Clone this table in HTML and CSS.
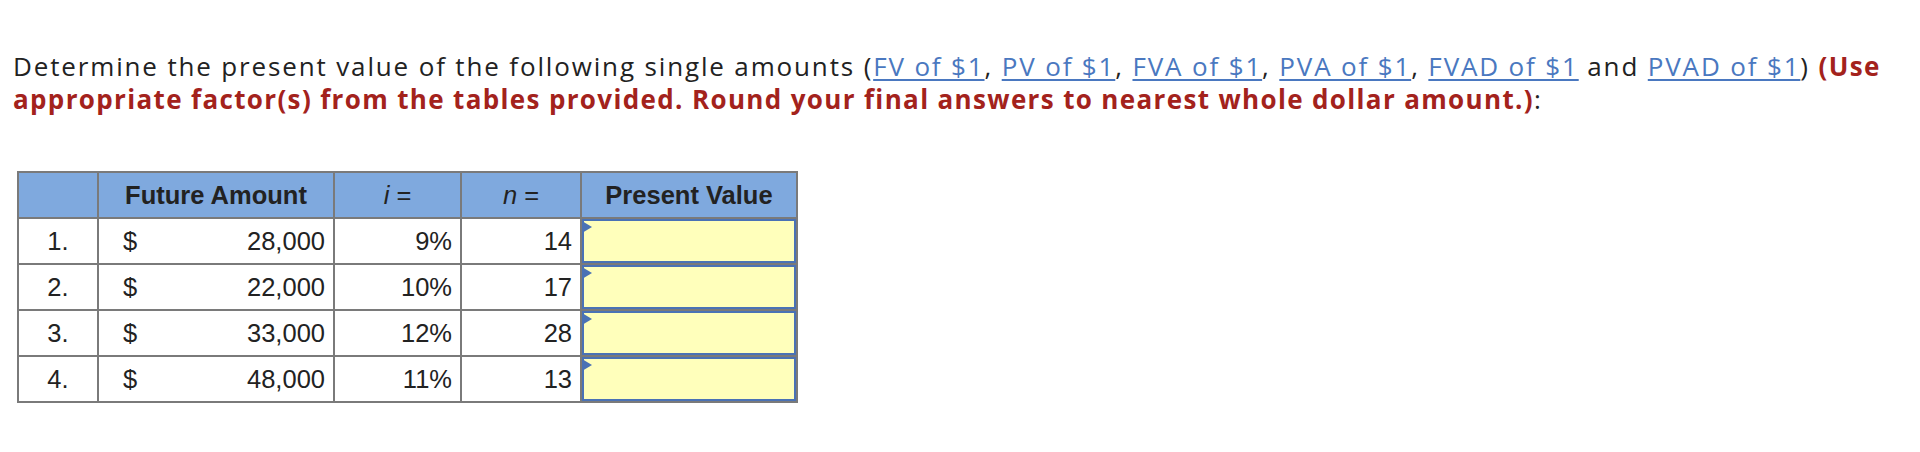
FILE: index.html
```html
<!DOCTYPE html>
<html>
<head>
<meta charset="utf-8">
<link rel="stylesheet" href="styles.css">
</head>
<body>
<div class="page">
  <p class="prompt">Determine the present value of the following single amounts (<a href="#">FV of $1</a>, <a href="#">PV of $1</a>, <a href="#">FVA of $1</a>, <a href="#">PVA of $1</a>, <a href="#">FVAD of $1</a> and <a href="#">PVAD of $1</a>) <strong class="note">(Use appropriate factor(s) from the tables provided. Round your final answers to nearest whole dollar amount.)</strong>:</p>

  <table class="grid">
    <colgroup>
      <col class="c-num"><col class="c-amt"><col class="c-rate"><col class="c-n"><col class="c-pv">
    </colgroup>
    <thead>
      <tr>
        <th></th>
        <th class="bold">Future Amount</th>
        <th><i>i</i> =</th>
        <th><i>n</i> =</th>
        <th class="bold">Present Value</th>
      </tr>
    </thead>
    <tbody>
      <tr>
        <td class="num">1.</td>
        <td><div class="money"><span>$</span><span>28,000</span></div></td>
        <td class="right">9%</td>
        <td class="right">14</td>
        <td class="input-cell"><div class="answer"></div><span class="flag"></span></td>
      </tr>
      <tr>
        <td class="num">2.</td>
        <td><div class="money"><span>$</span><span>22,000</span></div></td>
        <td class="right">10%</td>
        <td class="right">17</td>
        <td class="input-cell"><div class="answer"></div><span class="flag"></span></td>
      </tr>
      <tr>
        <td class="num">3.</td>
        <td><div class="money"><span>$</span><span>33,000</span></div></td>
        <td class="right">12%</td>
        <td class="right">28</td>
        <td class="input-cell"><div class="answer"></div><span class="flag"></span></td>
      </tr>
      <tr>
        <td class="num">4.</td>
        <td><div class="money"><span>$</span><span>48,000</span></div></td>
        <td class="right">11%</td>
        <td class="right">13</td>
        <td class="input-cell"><div class="answer"></div><span class="flag"></span></td>
      </tr>
    </tbody>
  </table>
</div>
</body>
</html>
```

FILE: styles.css
```css
html, body {
  margin: 0;
  padding: 0;
  background: #ffffff;
}

.page {
  padding: 50px 0 0 13px;
}

.prompt {
  margin: 0;
  font-family: "Open Sans", "Noto Sans", sans-serif;
  font-size: 26px;
  letter-spacing: 1.85px;
  line-height: 33px;
  color: #222222;
}

.prompt a {
  color: #4a78c0;
  text-decoration: underline;
  text-decoration-thickness: 2px;
  text-underline-offset: 3px;
}

.note {
  color: #a3221c;
  font-weight: 700;
  letter-spacing: 1.35px;
}

.grid {
  margin: 55px 0 0 4px;
  table-layout: fixed;
  width: 781px;
  border-collapse: separate;
  border-spacing: 2px;
  background: #7a7a7a;
  font-family: "Liberation Sans", Arial, sans-serif;
  font-size: 25.5px;
  letter-spacing: 0;
  color: #222222;
}

.c-num { width: 78px; }
.c-amt { width: 234px; }
.c-rate { width: 125px; }
.c-n { width: 118px; }
.c-pv { width: 214px; }

.grid th {
  background: #7fa9de;
  height: 44px;
  padding: 0;
  font-weight: 400;
  text-align: center;
  vertical-align: middle;
}

.grid th.bold {
  font-weight: 700;
}

.grid td {
  background: #ffffff;
  height: 44px;
  padding: 0 8px;
  vertical-align: middle;
}

.grid td.num {
  text-align: center;
  padding: 0;
}

.grid td.right {
  text-align: right;
}

.money {
  display: flex;
  justify-content: space-between;
  padding-left: 16px;
}

.grid td.input-cell {
  padding: 0;
  position: relative;
}

.answer {
  height: 44px;
  box-sizing: border-box;
  border: 2px solid #4a72b5;
  background: #ffffbb;
}

.flag {
  position: absolute;
  left: 0;
  top: 2px;
  width: 0;
  height: 0;
  border-left: 10px solid #4a72b5;
  border-top: 6px solid transparent;
  border-bottom: 6px solid transparent;
}
```
